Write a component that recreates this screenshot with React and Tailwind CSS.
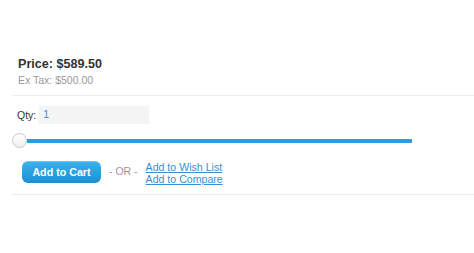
export default function App() {
  return (
    <div className="w-[474px] h-[253px] bg-white overflow-hidden font-['Liberation_Sans',Arial,sans-serif]">
      <div className="pt-[57px] pl-[12px]">
        <div className="pl-[6px]">
          <div className="text-[12.6px] leading-[15px] font-bold text-[#333]">Price: $589.50</div>
          <div className="mt-[2px] text-[10.5px] leading-[13px] text-[#999]">Ex Tax: $500.00</div>
        </div>
        <div className="mt-[8px] h-px bg-[#ececec]" />
        <div className="mt-[10px] flex items-center">
          <span className="ml-[5px] text-[10.5px] leading-[13px] text-[#333]">Qty:</span>
          <div className="ml-[3px] w-[110px] h-[18px] bg-[#f4f4f4] flex items-center pl-[4px] text-[10.5px] text-[#3a8ed6]">1</div>
        </div>
        <div className="mt-[9px] flex items-center">
          <div className="w-[15px] h-[15px] rounded-full border border-[#c8c8c8] bg-gradient-to-b from-white to-[#f0f0f0] shrink-0" />
          <div className="w-[385px] h-[4px] bg-[#2f9ad9] rounded-r-[1px]" />
        </div>
        <div className="mt-[13px] pl-[10px] flex items-start">
          <button className="w-[79px] h-[22px] rounded-[6px] bg-gradient-to-b from-[#3cb2ee] to-[#1a8fd2] text-white font-bold text-[10.7px] leading-none flex items-center justify-center shadow-[inset_0_1px_0_rgba(255,255,255,0.25)]">
            Add to Cart
          </button>
          <span className="ml-[8px] h-[22px] flex items-center text-[10.5px] text-[#999]">- OR -</span>
          <div className="ml-[8px] flex flex-col text-[10.6px] leading-[12px] text-[#3a8ed6]">
            <a className="underline">Add to Wish List</a>
            <a className="underline">Add to Compare</a>
          </div>
        </div>
        <div className="mt-[9px] h-px bg-[#ececec]" />
      </div>
    </div>
  );
}
